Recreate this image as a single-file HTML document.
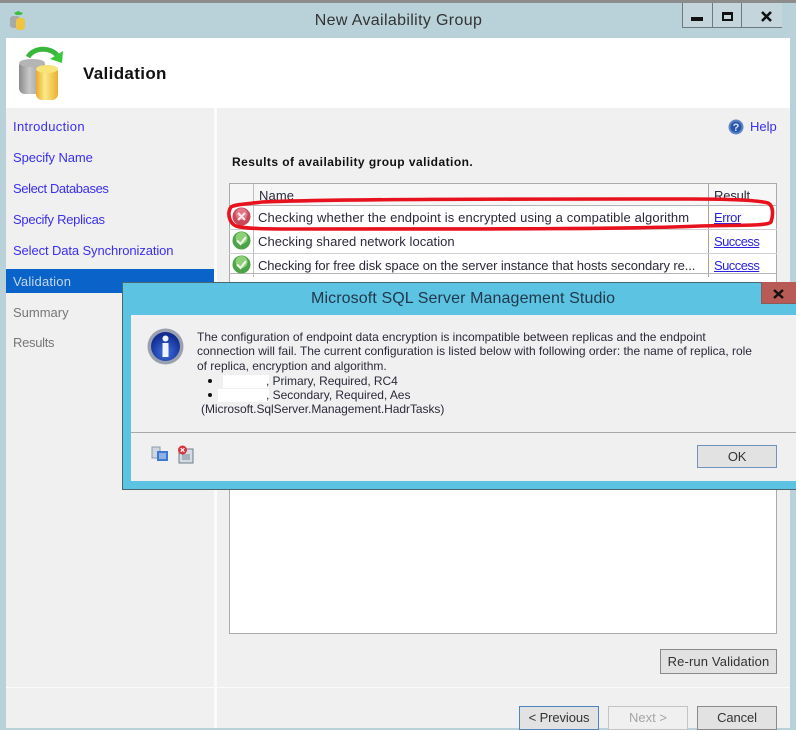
<!DOCTYPE html>
<html><head><meta charset="utf-8"><style>
*{box-sizing:border-box}
html,body{margin:0;padding:0}
body{width:796px;height:728px;overflow:hidden;position:relative;background:#b9d2d9;font-family:"Liberation Sans",sans-serif;font-size:13px;color:#2a2a3a}
.a{position:absolute}
.t{position:absolute;white-space:nowrap;line-height:16px}
.l{color:#3a2ff0}
.u{color:#2a22e0;text-decoration:underline}
.btn{position:absolute;background:#e2e2e2;border:1px solid #8a8a8a;text-align:center;line-height:22px;white-space:nowrap;color:#333}
.row{position:absolute;left:229px;width:548px;height:1px;background:#b5b5b5}
</style></head><body>
<div class="a" style="left:0;top:0;width:796px;height:3px;background:#8c8c8c"></div>
<svg class="a" style="left:9px;top:10px" width="18" height="20" viewBox="0 0 18 20"><path d="M5 3L9 1L14 3L12 5H7z" fill="#3fbf3f"/><rect x="1" y="6" width="10" height="12" rx="3" fill="#a9a9a9"/><rect x="7" y="8" width="9" height="12" rx="3" fill="#efc53f"/></svg>
<div class="t" style="left:0;width:796px;top:12px;text-align:center;font-size:16px;line-height:18px;color:#333;letter-spacing:.35px;text-indent:1px">New Availability Group</div>
<div class="a" style="left:682px;top:3px;width:100px;height:25px;background:#c4d6db;border-left:1px solid #6f7a7e;border-bottom:1px solid #6f7a7e"></div>
<div class="a" style="left:712px;top:3px;width:1px;height:25px;background:#6f7a7e"></div>
<div class="a" style="left:741px;top:3px;width:1px;height:25px;background:#6f7a7e"></div>
<div class="a" style="left:691px;top:17px;width:12px;height:4px;background:#111"></div>
<div class="a" style="left:722px;top:12px;width:11px;height:9px;border:2px solid #111;border-top-width:3px"></div>
<svg class="a" style="left:761px;top:11px" width="11" height="11" viewBox="0 0 11 11"><path d="M1 1L10 10M10 1L1 10" stroke="#111" stroke-width="2.6"/></svg>

<div class="a" style="left:6px;top:38px;width:784px;height:690px;background:#f0f0f0"></div>
<div class="a" style="left:6px;top:38px;width:784px;height:70px;background:#fff"></div>
<div class="a" style="left:214px;top:108px;width:3px;height:620px;background:#fbfbfb"></div>

<svg class="a" style="left:16px;top:45px" width="52" height="58" viewBox="0 0 52 58">
<defs><linearGradient id="gr" x1="0" x2="1"><stop offset="0" stop-color="#8a8a8a"/><stop offset=".4" stop-color="#c8c8c8"/><stop offset="1" stop-color="#8f8f8f"/></linearGradient><linearGradient id="ye" x1="0" x2="1"><stop offset="0" stop-color="#e9a928"/><stop offset=".4" stop-color="#fbe98a"/><stop offset="1" stop-color="#e8b02c"/></linearGradient></defs>
<path d="M12 12C18 2 34 2 41 10" fill="none" stroke="#38b83a" stroke-width="5"/><path d="M34 14L47 6 46 18z" fill="#38c83a"/>
<rect x="3" y="15" width="26" height="34" rx="6" fill="url(#gr)"/><ellipse cx="16" cy="18" rx="13" ry="4" fill="#b5b5b5"/>
<rect x="20" y="21" width="22" height="34" rx="6" fill="url(#ye)"/><ellipse cx="31" cy="24" rx="11" ry="4" fill="#f8e27a"/>
</svg>
<div class="t" style="left:83px;top:65px;font-size:17px;line-height:18px;font-weight:bold;color:#111;letter-spacing:.35px">Validation</div>

<div class="t l" style="left:13px;top:119px;letter-spacing:.33px">Introduction</div>
<div class="t l" style="left:13px;top:150px;letter-spacing:-.1px">Specify Name</div>
<div class="t l" style="left:13px;top:181px;letter-spacing:-.4px">Select Databases</div>
<div class="t l" style="left:13px;top:212px;letter-spacing:-.27px">Specify Replicas</div>
<div class="t l" style="left:13px;top:243px;letter-spacing:-.11px">Select Data Synchronization</div>
<div class="a" style="left:6px;top:269px;width:208px;height:24px;background:#0a63c9"></div>
<div class="t" style="left:13px;top:274px;color:#c5d8f2;letter-spacing:.2px">Validation</div>
<div class="t" style="left:13px;top:305px;color:#777">Summary</div>
<div class="t" style="left:13px;top:335px;color:#777;letter-spacing:-.3px">Results</div>

<svg class="a" style="left:728px;top:119px" width="16" height="16" viewBox="0 0 16 16"><circle cx="8" cy="8" r="7.5" fill="#5f86c8"/><circle cx="8" cy="8" r="5.5" fill="#2a55a8"/><text x="8" y="12" font-size="11" font-weight="bold" fill="#d8e4f5" text-anchor="middle" font-family="Liberation Sans">?</text></svg>
<div class="t l" style="left:750px;top:119px">Help</div>
<div class="t" style="left:232px;top:154px;font-weight:bold;color:#111;font-size:12px;letter-spacing:.45px">Results of availability group validation.</div>

<div class="a" style="left:229px;top:183px;width:548px;height:451px;background:#fff;border:1px solid #aaa"></div>
<div class="a" style="left:230px;top:184px;width:546px;height:21px;background:#f6f6f6"></div>
<div class="a" style="left:253px;top:184px;width:1px;height:93px;background:#c0c0c0"></div>
<div class="a" style="left:708px;top:184px;width:1px;height:93px;background:#a5a5a5"></div>
<div class="row" style="top:205px"></div>
<div class="row" style="top:229px;background:#d0d0d0"></div>
<div class="row" style="top:253px;background:#d0d0d0"></div>
<div class="row" style="top:273px;background:#b5b5b5"></div>
<div class="t" style="left:259px;top:188px;letter-spacing:.1px">Name</div>
<div class="t" style="left:714px;top:188px;letter-spacing:-.15px">Result</div>

<svg class="a" style="left:232px;top:207px" width="19" height="19" viewBox="0 0 19 19"><circle cx="9.5" cy="9.5" r="9" fill="#c8485a"/><circle cx="9.5" cy="7" r="6" fill="#e07885"/><path d="M6 6L13 13M13 6L6 13" stroke="#f6e8ea" stroke-width="2.2"/></svg>
<div class="t" style="left:258px;top:210px;letter-spacing:.13px">Checking whether the endpoint is encrypted using a compatible algorithm</div>
<div class="t u" style="left:714px;top:210px;letter-spacing:-.4px">Error</div>
<svg class="a" style="left:232px;top:231px" width="19" height="19" viewBox="0 0 19 19"><circle cx="9.5" cy="9.5" r="9" fill="#4da34a"/><circle cx="9.5" cy="7" r="6" fill="#8ed07a"/><path d="M5 9.5L8.5 13L14 6" fill="none" stroke="#eef8ea" stroke-width="2.2"/></svg>
<div class="t" style="left:258px;top:234px;letter-spacing:.05px">Checking shared network location</div>
<div class="t u" style="left:714px;top:234px;letter-spacing:-.55px">Success</div>
<svg class="a" style="left:232px;top:255px" width="19" height="19" viewBox="0 0 19 19"><circle cx="9.5" cy="9.5" r="9" fill="#4da34a"/><circle cx="9.5" cy="7" r="6" fill="#8ed07a"/><path d="M5 9.5L8.5 13L14 6" fill="none" stroke="#eef8ea" stroke-width="2.2"/></svg>
<div class="t" style="left:258px;top:258px;letter-spacing:-.1px">Checking for free disk space on the server instance that hosts secondary re...</div>
<div class="t u" style="left:714px;top:258px;letter-spacing:-.55px">Success</div>

<svg class="a" style="left:0;top:0" width="796" height="728" viewBox="0 0 796 728"><path d="M262 202C340 199 500 199 690 199C730 199 757 200 768 203C774 206 773 216 771 222C768 226 740 225 700 226C640 229 500 229 300 229C270 229 245 229 236 226C229 223 227 213 231 207C236 204 248 204 262 202Z" fill="none" stroke="#e8121e" stroke-width="3.6"/></svg>

<div class="a" style="left:122px;top:282px;width:674px;height:208px;background:#5cc3e3;border:1px solid #4c6670;border-right:0"></div>
<div class="t" style="left:311px;top:290px;font-size:16px;line-height:18px;color:#22384a;letter-spacing:.11px">Microsoft SQL Server Management Studio</div>
<div class="a" style="left:761px;top:282px;width:35px;height:22px;background:#b85a55;border:1px solid #8c5a58;border-top:0;border-right:0"></div>
<svg class="a" style="left:773px;top:289px" width="11" height="10" viewBox="0 0 11 10"><path d="M1 1L10 9M10 1L1 9" stroke="#111" stroke-width="2.4"/></svg>
<div class="a" style="left:131px;top:315px;width:665px;height:166px;background:#f0f0f0"></div>
<div class="a" style="left:131px;top:432px;width:665px;height:1px;background:#a8a8a8"></div>

<svg class="a" style="left:147px;top:328px" width="37" height="37" viewBox="0 0 37 37"><defs><radialGradient id="bl" cx=".5" cy=".7" r=".6"><stop offset="0" stop-color="#3f6fe0"/><stop offset="1" stop-color="#122c90"/></radialGradient></defs><circle cx="18.5" cy="18.5" r="18" fill="#9aa0ae"/><circle cx="18.5" cy="18.5" r="14.5" fill="url(#bl)"/><rect x="15.5" y="15" width="6" height="14" fill="#f0f4ff"/><circle cx="18.5" cy="10.5" r="3" fill="#f0f4ff"/></svg>

<div style="position:absolute;left:197px;top:330px;font-size:12px;line-height:14.3px;color:#2a2a3a;white-space:nowrap;letter-spacing:-.01px">
The configuration of endpoint data encryption is incompatible between replicas and the endpoint<br>
connection will fail. The current configuration is listed below with following order: the name of replica, role<br>
of replica, encryption and algorithm.</div>
<div class="a" style="left:208px;top:379px;width:4px;height:4px;border-radius:50%;background:#111"></div>
<div class="a" style="left:208px;top:393px;width:4px;height:4px;border-radius:50%;background:#111"></div>
<div class="a" style="left:223px;top:375px;width:46px;height:13px;background:#fff"></div>
<div class="a" style="left:218px;top:389px;width:51px;height:13px;background:#fff"></div>
<div class="t" style="left:266px;top:373px;font-size:12px;letter-spacing:-.06px">, Primary, Required, RC4</div>
<div class="t" style="left:266px;top:387px;font-size:12px;letter-spacing:-.03px">, Secondary, Required, Aes</div>
<div class="t" style="left:201px;top:401px;font-size:12px;letter-spacing:-.05px">(Microsoft.SqlServer.Management.HadrTasks)</div>

<svg class="a" style="left:151px;top:445px" width="18" height="17" viewBox="0 0 18 17"><rect x="1" y="2" width="8" height="11" fill="#cfd6df" stroke="#8d9aab"/><rect x="6" y="6" width="11" height="10" fill="#3f78d0"/><path d="M8 9h7M8 11h7M8 13h7" stroke="#dbe8fa"/></svg>
<svg class="a" style="left:177px;top:445px" width="18" height="19" viewBox="0 0 18 19"><rect x="2" y="4" width="14" height="14" fill="#d5dbe2" stroke="#6f7c8c"/><path d="M5 10h8M5 12h8M5 14h8" stroke="#7a8899"/><circle cx="5.5" cy="5" r="4.5" fill="#d8343f"/><path d="M3.7 3.2L7.3 6.8M7.3 3.2L3.7 6.8" stroke="#fff" stroke-width="1.2"/></svg>
<div class="btn" style="left:697px;top:445px;width:80px;height:23px;border:1px solid #6f93bd;letter-spacing:-.3px">OK</div>

<div class="btn" style="left:660px;top:649px;width:117px;height:25px;line-height:23px;letter-spacing:.13px">Re-run Validation</div>
<div class="a" style="left:6px;top:687px;width:784px;height:1px;background:#fbfbfb"></div>
<div class="btn" style="left:519px;top:706px;width:80px;height:24px;border:1px solid #4d86bf;letter-spacing:-.1px">&lt; Previous</div>
<div class="btn" style="left:608px;top:706px;width:80px;height:24px;background:#f0f0f0;border-color:#c4c4c4;color:#a5a5a5">Next &gt;</div>
<div class="btn" style="left:697px;top:706px;width:80px;height:24px;letter-spacing:-.1px">Cancel</div>
</body></html>
